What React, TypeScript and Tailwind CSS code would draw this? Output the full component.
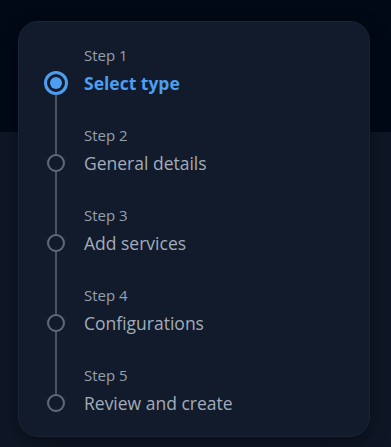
import React from "react";

const STEPS = [
  "Select type",
  "General details",
  "Add services",
  "Configurations",
  "Review and create",
];

const ACTIVE = 0;

const StepDot: React.FC<{ active: boolean }> = ({ active }) =>
  active ? (
    <div className="w-6 h-6 shrink-0 rounded-full border-[3px] border-[#4d9ef0] flex items-center justify-center">
      <div className="w-3 h-3 rounded-full bg-[#4d9ef0]" />
    </div>
  ) : (
    <div className="w-[18px] h-[18px] shrink-0 rounded-full border-2 border-[#5f6b7c]" />
  );

export default function App() {
  return (
    <div
      className="relative w-[391px] h-[447px] overflow-hidden bg-[#0f1726]"
      style={{ fontFamily: '"Open Sans", "Noto Sans", sans-serif' }}
    >
      <div className="h-[132px] bg-[#020916]" />

      <div className="absolute left-[18px] top-[21px] w-[352px] rounded-[20px] border border-[#1a2436] bg-[#111b2b] pt-[23px] pb-[19px] pl-[25px] shadow-[0_6px_20px_rgba(0,0,0,0.45)]">
        {STEPS.map((title, i) => {
          const isActive = i === ACTIVE;
          const isFirst = i === 0;
          const isLast = i === STEPS.length - 1;
          return (
            <div key={title} className="flex gap-4">
              <div className="w-6 shrink-0 flex flex-col items-center">
                <div
                  className={`w-[2px] ${isActive ? "h-[26px]" : "h-[29px]"} ${
                    isFirst ? "bg-transparent" : "bg-[#4a5363]"
                  }`}
                />
                <StepDot active={isActive} />
                <div
                  className={`w-[2px] flex-1 ${isLast ? "bg-transparent" : "bg-[#4a5363]"}`}
                />
              </div>
              <div className={isLast ? "" : "pb-[28px]"}>
                <div className="text-[15px] leading-5 text-[#95a0b1]">Step {i + 1}</div>
                <div
                  className={`mt-[4px] leading-7 ${
                    isActive
                      ? "text-[17.5px] font-bold text-[#4d9ef0]"
                      : "text-[17.5px] text-[#a3acba]"
                  }`}
                >
                  {title}
                </div>
              </div>
            </div>
          );
        })}
      </div>
    </div>
  );
}
